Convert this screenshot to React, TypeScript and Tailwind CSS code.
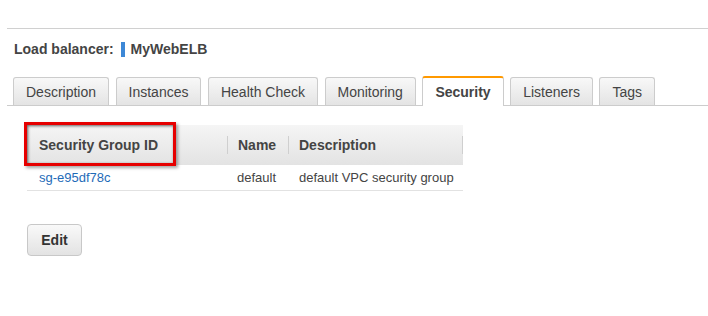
import React from "react";

const tabs = ["Description", "Instances", "Health Check", "Monitoring", "Security", "Listeners", "Tags"];

export default function App() {
  return (
    <div className="w-full h-[316px] bg-white font-['Liberation_Sans',Arial,sans-serif] text-[#444]">
      <div className="pl-[7px] pt-[28px]">
        <div className="border-t border-[#d0d0d0]" />
        <div className="mt-[12px] pl-[7px] flex items-center text-[14px] leading-4 font-bold text-[#444]">
          <span>Load balancer:</span>
          <span className="ml-[7px] inline-block w-[4px] h-[15px] bg-[#3d88d6]" />
          <span className="ml-[6px]">MyWebELB</span>
        </div>

        <div className="mt-[19px] flex items-end gap-[6.5px] pl-[6px] border-b border-[#cccccc]">
          {tabs.map((t) =>
            t === "Security" ? (
              <div
                key={t}
                className="relative z-10 -mb-px bg-white border-t-2 border-t-[#ff9900] border-x border-x-[#cccccc] rounded-t-[3px] px-[12px] pt-[6px] pb-[6px] text-[14px] leading-4 font-bold text-[#444]"
              >
                {t}
              </div>
            ) : (
              <div
                key={t}
                className="border border-b-0 border-[#cccccc] rounded-t-[3px] bg-gradient-to-b from-[#f8f8f8] to-[#e4e4e4] px-[12px] pt-[6px] pb-[5px] text-[14px] leading-4 text-[#444]"
              >
                {t}
              </div>
            )
          )}
        </div>

        <div className="ml-[20px] mt-[19px] w-[436px] relative">
          <div className="grid grid-cols-[201px_61px_174px] h-[40px] bg-gradient-to-b from-[#f5f5f5] to-[#e3e3e3] text-[14px] leading-4 font-bold text-[#444]">
            <div className="flex items-center justify-between pl-[12px]">
              <span>Security Group ID</span>
              <span className="w-px h-[18px] bg-[#cfcfcf]" />
            </div>
            <div className="flex items-center justify-between pl-[10px]">
              <span>Name</span>
              <span className="w-px h-[18px] bg-[#cfcfcf]" />
            </div>
            <div className="flex items-center justify-between pl-[10px]">
              <span>Description</span>
              <span className="w-px h-[18px] bg-[#cfcfcf]" />
            </div>
          </div>
          <div className="grid grid-cols-[201px_61px_174px] h-[26px] border-b border-[#e2e2e2] text-[13px] leading-4 text-[#444] items-center">
            <div className="pl-[12px] text-[#1e6bb8]">sg-e95df78c</div>
            <div className="pl-[9px]">default</div>
            <div className="pl-[10px] whitespace-nowrap">default VPC security group</div>
          </div>
          <div className="absolute left-[-3px] top-[-3px] w-[152px] h-[44px] border-[3px] border-[#e60000] shadow-[inset_1px_1px_3px_rgba(0,0,0,0.6),2px_2px_3px_rgba(0,0,0,0.35)]" />
        </div>

        <button className="ml-[20px] mt-[33px] w-[55px] h-[32px] rounded-[4px] border border-[#c8c8c8] bg-gradient-to-b from-[#f9f9f9] to-[#e3e3e3] text-[14px] leading-4 font-bold text-[#333] flex items-center justify-center">
          Edit
        </button>
      </div>
    </div>
  );
}
